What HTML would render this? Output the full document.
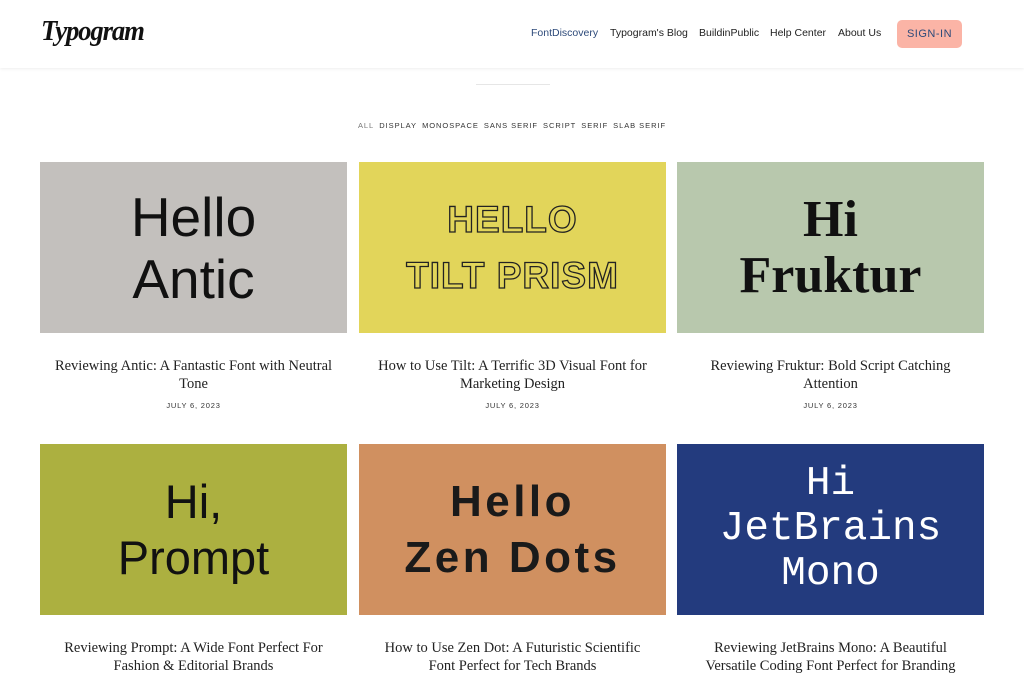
<!DOCTYPE html>
<html><head><meta charset="utf-8"><style>
*{margin:0;padding:0;box-sizing:border-box}
body{width:1024px;height:678px;overflow:hidden;background:#fff;font-family:"Liberation Sans",sans-serif;position:relative}
.hdr{position:absolute;left:0;top:0;width:1024px;height:68px;background:#fff;box-shadow:0 1px 3px rgba(0,0,0,.07)}
.logo{position:absolute;left:41px;top:15px;font-family:"Liberation Serif",serif;font-weight:bold;font-style:italic;font-size:29px;letter-spacing:-1.2px;color:#111;transform:scaleX(.92);transform-origin:left}
.nav{position:absolute;top:27px;font-size:10.5px;color:#222}
.btn{position:absolute;left:897px;top:20px;width:65px;height:28px;background:#fbb4a6;border-radius:5px;color:#2d4a7a;font-size:11px;letter-spacing:.5px;text-align:center;line-height:28px}
.rule{position:absolute;left:476px;top:84px;width:74px;height:1px;background:#e6e6e6}
.cats{position:absolute;top:121px;left:0;width:1024px;text-align:center;font-size:7.5px;letter-spacing:.95px;color:#333}
.cats span{margin:0 1px}
.card{position:absolute;width:307px}
.img{height:171px;display:flex;align-items:center;justify-content:center;text-align:center;flex-direction:column}
.t{font-family:"Liberation Serif",serif;font-size:14.5px;line-height:18px;color:#222;text-align:center;margin-top:24px;padding:0 13px}
.d{font-size:7.5px;letter-spacing:.8px;color:#333;text-align:center;margin-top:8px}
</style></head><body>
<div class="hdr">
<div class="logo">Typogram</div>
<div class="nav" style="left:531px;color:#2d4a7a">FontDiscovery</div>
<div class="nav" style="left:610px">Typogram's Blog</div>
<div class="nav" style="left:699px">BuildinPublic</div>
<div class="nav" style="left:770px">Help Center</div>
<div class="nav" style="left:838px">About Us</div>
<div class="btn">SIGN-IN</div>
</div>
<div class="rule"></div>
<div class="cats"><span style="color:#777">ALL</span> <span>DISPLAY</span> <span>MONOSPACE</span> <span>SANS SERIF</span> <span>SCRIPT</span> <span>SERIF</span> <span>SLAB SERIF</span></div>

<div class="card" style="left:40px;top:162px"><div class="img" style="background:#c3c0bd;font-size:55px;line-height:62px;color:#111">Hello<br>Antic</div>
<div class="t">Reviewing Antic: A Fantastic Font with Neutral Tone</div><div class="d">JULY 6, 2023</div></div>
<div class="card" style="left:359px;top:162px"><div class="img" style="background:#e2d55a;font-size:37px;line-height:56px;font-weight:bold;color:#e2d55a;-webkit-text-stroke:1.3px #222;letter-spacing:1px">HELLO<br>TILT PRISM</div>
<div class="t">How to Use Tilt: A Terrific 3D Visual Font for Marketing Design</div><div class="d">JULY 6, 2023</div></div>
<div class="card" style="left:677px;top:162px"><div class="img" style="background:#b8c8ad;font-size:52px;line-height:56px;font-weight:bold;color:#111;font-family:'Liberation Serif',serif">Hi<br>Fruktur</div>
<div class="t">Reviewing Fruktur: Bold Script Catching Attention</div><div class="d">JULY 6, 2023</div></div>

<div class="card" style="left:40px;top:444px"><div class="img" style="background:#acb040;font-size:47px;line-height:56px;color:#111">Hi,<br>Prompt</div>
<div class="t">Reviewing Prompt: A Wide Font Perfect For Fashion &amp; Editorial Brands</div></div>
<div class="card" style="left:359px;top:444px"><div class="img" style="background:#d09060;font-size:44px;line-height:56px;font-weight:bold;color:#1a1a1a;letter-spacing:3.5px">Hello<br>Zen Dots</div>
<div class="t">How to Use Zen Dot: A Futuristic Scientific Font Perfect for Tech Brands</div></div>
<div class="card" style="left:677px;top:444px"><div class="img" style="background:#233b7e;font-size:41px;line-height:45px;color:#fff;font-family:'Liberation Mono',monospace">Hi<br>JetBrains<br>Mono</div>
<div class="t">Reviewing JetBrains Mono: A Beautiful Versatile Coding Font Perfect for Branding</div></div>
</body></html>
